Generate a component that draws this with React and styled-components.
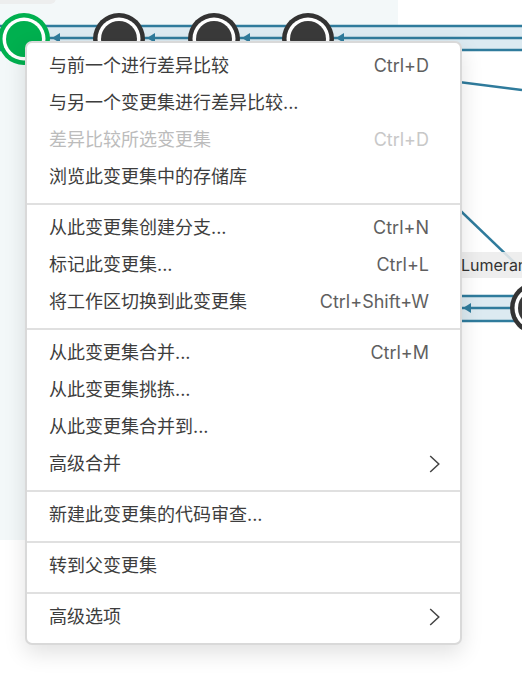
import React from "react";
import styled, { createGlobalStyle } from "styled-components";

const Global = createGlobalStyle`
  html, body {
    margin: 0;
    padding: 0;
    background: #ffffff;
    overflow: hidden;
  }
  * { box-sizing: border-box; }
`;

const groups = [
  [
    { label: "与前一个进行差异比较", key: "Ctrl+D" },
    { label: "与另一个变更集进行差异比较..." },
    { label: "差异比较所选变更集", key: "Ctrl+D", disabled: true },
    { label: "浏览此变更集中的存储库" },
  ],
  [
    { label: "从此变更集创建分支...", key: "Ctrl+N" },
    { label: "标记此变更集...", key: "Ctrl+L" },
    { label: "将工作区切换到此变更集", key: "Ctrl+Shift+W" },
  ],
  [
    { label: "从此变更集合并...", key: "Ctrl+M" },
    { label: "从此变更集挑拣..." },
    { label: "从此变更集合并到..." },
    { label: "高级合并", sub: true },
  ],
  [{ label: "新建此变更集的代码审查..." }],
  [{ label: "转到父变更集" }],
  [{ label: "高级选项", sub: true }],
];

const nodes = [
  { x: 24, y: 39, green: true },
  { x: 119, y: 39 },
  { x: 214, y: 39 },
  { x: 308, y: 39 },
  { x: 536, y: 308 },
];

const arrows = [
  { x: 52, y: 38 },
  { x: 147, y: 38 },
  { x: 242, y: 38 },
  { x: 336, y: 38 },
  { x: 463, y: 308 },
];

export default function App() {
  return (
    <Page>
      <Global />
      <Pane />

      <Graph width="522" height="684" viewBox="0 0 522 684">
        <rect x="0" y="26" width="522" height="24" fill="#dceaf1" />
        <rect x="440" y="296" width="82" height="25" fill="#dceaf1" />
        <g stroke="#2f7b9c" strokeWidth="2.5" fill="none">
          <line x1="0" y1="26" x2="522" y2="26" />
          <line x1="0" y1="38" x2="522" y2="38" />
          <line x1="0" y1="50" x2="522" y2="50" />
          <line x1="380" y1="72" x2="522" y2="90" />
          <line x1="420" y1="172" x2="516" y2="264" />
          <line x1="440" y1="296" x2="522" y2="296" />
          <line x1="440" y1="308" x2="522" y2="308" />
          <line x1="440" y1="321" x2="522" y2="321" />
        </g>
        {arrows.map((a, i) => (
          <polygon
            key={i}
            points={`${a.x},${a.y} ${a.x + 8},${a.y - 5} ${a.x + 8},${a.y + 5}`}
            fill="#2f7b9c"
          />
        ))}
        {nodes.map((n, i) => (
          <g key={i}>
            <circle cx={n.x} cy={n.y} r="26" fill={n.green ? "#00b04f" : "#333333"} />
            <circle cx={n.x} cy={n.y} r="21.5" fill="#ffffff" />
            <circle cx={n.x} cy={n.y} r="18" fill={n.green ? "#00b04f" : "#3a3a3a"} />
          </g>
        ))}
      </Graph>

      <Tag $top={-22} $left={-6}>/main</Tag>
      <Tag $top={252} $left={451}>Lumerano</Tag>

      <Menu>
        {groups.map((items, gi) => (
          <Group key={gi}>
            {items.map((it, ii) => (
              <Item key={ii} $disabled={it.disabled}>
                <Label>{it.label}</Label>
                {it.key && <Shortcut>{it.key}</Shortcut>}
                {it.sub && (
                  <Chevron width="11" height="18" viewBox="0 0 11 18">
                    <path d="M1.2 1 L9.8 9 L1.2 17" />
                  </Chevron>
                )}
              </Item>
            ))}
          </Group>
        ))}
      </Menu>
    </Page>
  );
}

const Page = styled.div`
  position: relative;
  width: 522px;
  height: 684px;
  overflow: hidden;
  background: #ffffff;
  font-family: Inter, "Noto Sans CJK SC", sans-serif;
`;

const Pane = styled.div`
  width: 398px;
  height: 540px;
  background: #f3f8f9;
`;

const Graph = styled.svg`
  position: absolute;
  left: 0;
  top: 0;
`;

const Tag = styled.div`
  position: absolute;
  top: ${(p) => p.$top}px;
  left: ${(p) => p.$left}px;
  height: 26px;
  padding: 0 10px;
  display: flex;
  align-items: center;
  border-radius: 6px;
  background: rgba(236, 236, 236, 0.88);
  color: #333333;
  font-size: 16px;
  white-space: nowrap;
`;

const Menu = styled.div`
  position: absolute;
  left: 25px;
  top: 41px;
  width: 437px;
  background: #ffffff;
  border: 2px solid #d9d9d9;
  border-radius: 7px;
  box-shadow: 0 8px 22px rgba(0, 0, 0, 0.12);
  display: flex;
  flex-direction: column;
`;

const Group = styled.div`
  padding: 6px 0;
  display: flex;
  flex-direction: column;

  & + & {
    border-top: 2px solid #e0e0e0;
  }
`;

const Item = styled.div`
  height: 37px;
  padding: 0 20px 3px 22px;
  display: flex;
  align-items: center;
  justify-content: space-between;
  color: ${(p) => (p.$disabled ? "#bcbcbc" : "#3d3d3d")};
  font-size: 18px;
  line-height: 1;
  cursor: default;
`;

const Label = styled.span`
  white-space: nowrap;
`;

const Shortcut = styled.span`
  margin-right: 11px;
  font-size: 18px;
  opacity: 0.82;
  white-space: nowrap;
`;

const Chevron = styled.svg`
  fill: none;
  stroke: #444444;
  stroke-width: 1.5;
`;
